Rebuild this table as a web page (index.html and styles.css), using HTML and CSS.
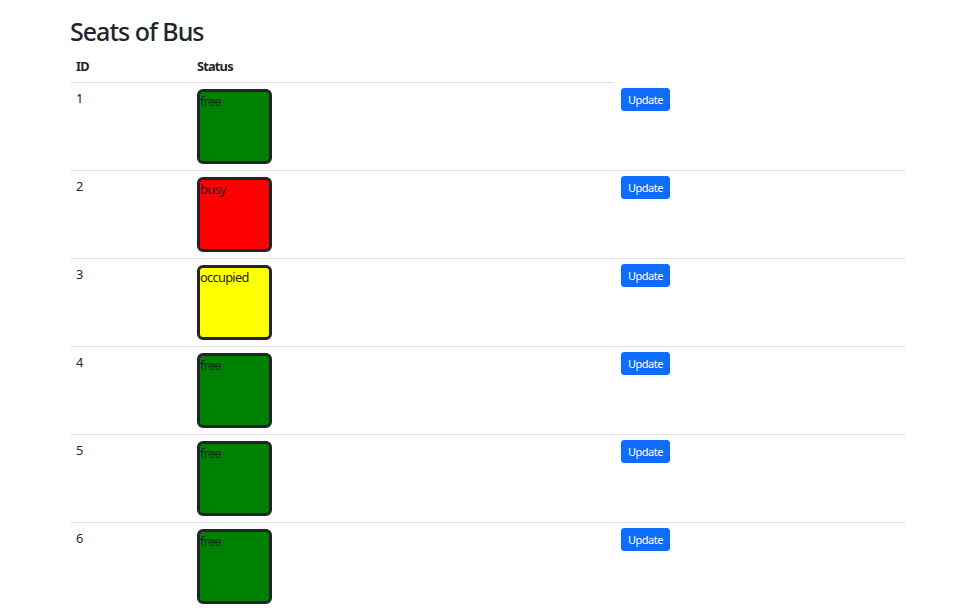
FILE: index.html
```html
<!DOCTYPE html>
<html lang="en">
<head>
<meta charset="utf-8">
<title>Seats of Bus</title>
<link rel="stylesheet" href="styles.css">
</head>
<body>
<main class="page">
  <h2 class="title">Seats of Bus</h2>
  <table class="seats">
    <colgroup>
      <col class="col-id">
      <col class="col-status">
      <col class="col-action">
    </colgroup>
    <thead>
      <tr><th>ID</th><th>Status</th></tr>
    </thead>
    <tbody>
      <tr><td>1</td><td><div class="seat free">free</div></td><td><button class="btn">Update</button></td></tr>
      <tr><td>2</td><td><div class="seat busy">busy</div></td><td><button class="btn">Update</button></td></tr>
      <tr><td>3</td><td><div class="seat occupied">occupied</div></td><td><button class="btn">Update</button></td></tr>
      <tr><td>4</td><td><div class="seat free">free</div></td><td><button class="btn">Update</button></td></tr>
      <tr><td>5</td><td><div class="seat free">free</div></td><td><button class="btn">Update</button></td></tr>
      <tr><td>6</td><td><div class="seat free">free</div></td><td><button class="btn">Update</button></td></tr>
    </tbody>
  </table>
</main>
</body>
</html>
```

FILE: styles.css
```css
html, body {
  margin: 0;
  padding: 0;
  background: #fff;
}
body {
  font-family: "Noto Sans", "Liberation Sans", sans-serif;
  font-size: 12.8px;
  line-height: 1.5;
  color: #212529;
}
.page {
  padding: 13px 0 0 70px;
}
.title {
  margin: 3px 0 3px 0;
  font-size: 25px;
  font-weight: 500;
  line-height: 31px;
  letter-spacing: -1px;
}
.seats {
  width: 836px;
  border-collapse: collapse;
  table-layout: fixed;
}
.col-id { width: 121px; }
.col-status { width: 423px; }
.col-action { width: 292px; }
.seats th {
  text-align: left;
  font-weight: 700;
  font-size: 12.8px;
  line-height: 19px;
  letter-spacing: -0.8px;
  padding: 7px 6px 6px 6px;
  border-bottom: 1px solid #dee2e6;
}
.seats td {
  vertical-align: top;
  padding: 6px 6px 6px 6px;
  line-height: 19px;
  border-bottom: 1px solid #dee2e6;
}
.seat {
  box-sizing: border-box;
  width: 75px;
  height: 75px;
  border: 3px solid #212529;
  border-radius: 6px;
  font-size: 12.8px;
  line-height: 19px;
  letter-spacing: -0.7px;
  padding: 0;
}
.free { background: #008000; }
.busy { background: #ff0000; }
.occupied { background: #ffff00; }
.btn {
  display: block;
  margin: -1px 0 0 1px;
  font-family: inherit;
  font-size: 11px;
  line-height: 15px;
  letter-spacing: -0.5px;
  padding: 3px 6px;
  border: 1px solid #0d6efd;
  border-radius: 3px;
  background: #0d6efd;
  color: #fff;
}
```
